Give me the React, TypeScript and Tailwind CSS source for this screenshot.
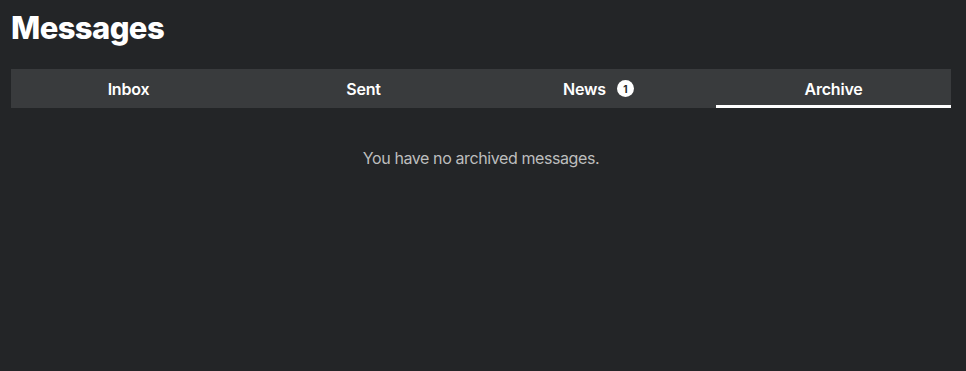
import React, { useState } from 'react';

const tabs = [
  { id: 'inbox', label: 'Inbox' },
  { id: 'sent', label: 'Sent' },
  { id: 'news', label: 'News', badge: 1 },
  { id: 'archive', label: 'Archive' },
];

export default function App() {
  const [active, setActive] = useState('archive');

  return (
    <div className="min-h-[371px] w-full bg-[#232527] px-[11px] pt-[9px] font-['Inter',sans-serif] text-white">
      <h1 className="text-[31px] font-extrabold leading-[38px] tracking-[-0.6px]">Messages</h1>

      <div className="mt-[22px] flex w-[940px] bg-[#393b3d]">
        {tabs.map(tab => (
          <button
            key={tab.id}
            onClick={() => setActive(tab.id)}
            className="relative flex h-[39px] flex-1 items-center justify-center gap-[11px] text-[16px] font-semibold tracking-[-0.2px] text-white"
          >
            {tab.label}
            {tab.badge !== undefined && (
              <span className="flex h-[17px] w-[17px] items-center justify-center rounded-full bg-white text-[10px] font-bold leading-none tracking-normal text-[#232527]">
                {tab.badge}
              </span>
            )}
            {active === tab.id && <span className="absolute bottom-0 left-0 right-0 h-[3px] bg-white" />}
          </button>
        ))}
      </div>

      <p className="w-[940px] pt-[38px] text-center text-[16px] leading-6 tracking-[-0.4px] text-[#bdbebe]">
        You have no {active === 'archive' ? 'archived' : active} messages.
      </p>
    </div>
  );
}
